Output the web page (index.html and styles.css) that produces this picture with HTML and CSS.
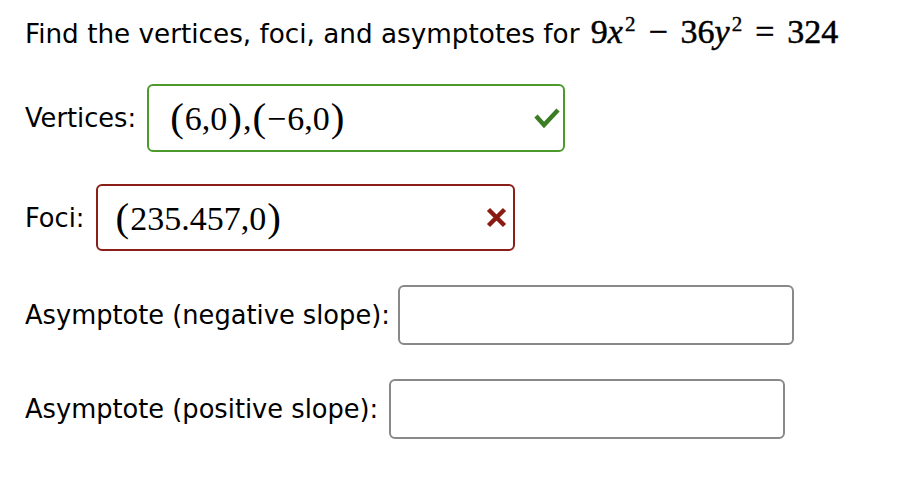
FILE: index.html
```html
<!DOCTYPE html>
<html>
<head>
<meta charset="utf-8">
<link rel="stylesheet" href="styles.css">
</head>
<body>
<div class="page">
  <p class="title">Find the vertices, foci, and asymptotes for <span class="math">9<i class="vx">x</i><sup>2</sup><span class="bin">−</span>36<i class="vy">y</i><sup>2</sup><span class="rel">=</span>324</span></p>
  <div class="rows">
    <div class="row">
      <span class="label">Vertices:</span>
      <div class="box box-correct">
        <span class="value"><span class="paren">(</span>6,0<span class="paren">)</span>,<span class="paren">(</span><span class="minus">−</span>6,0<span class="paren">)</span></span>
        <svg class="icon" width="26" height="22" viewBox="0 0 26 22"><polyline points="2,9 10,18 24,3" fill="none" stroke="#3b7d23" stroke-width="4.5"/></svg>
      </div>
    </div>
    <div class="row row-foci">
      <span class="label">Foci:</span>
      <div class="box box-wrong">
        <span class="value"><span class="paren">(</span>235.457,0<span class="paren">)</span></span>
        <svg class="icon" width="21" height="21" viewBox="0 0 21 21"><path d="M2.5 2.5 L18.5 18.5 M18.5 2.5 L2.5 18.5" stroke="#8a1b12" stroke-width="4.5"/></svg>
      </div>
    </div>
    <div class="row row-neg">
      <span class="label">Asymptote (negative slope):</span>
      <div class="box box-empty"></div>
    </div>
    <div class="row row-pos">
      <span class="label">Asymptote (positive slope):</span>
      <div class="box box-empty"></div>
    </div>
  </div>
</div>
</body>
</html>
```

FILE: styles.css
```css
html, body {
  margin: 0;
  padding: 0;
  background: #ffffff;
}
.page {
  padding: 19px 0 0 25px;
  font-family: "DejaVu Sans", sans-serif;
  font-size: 26px;
  color: #000;
}
.title {
  margin: 0;
  height: 30px;
  line-height: 30px;
  font-size: 26.25px;
  white-space: nowrap;
}
.math {
  font-family: "Liberation Serif", serif;
  font-size: 34px;
  line-height: 0;
  margin-left: 3px;
  -webkit-text-stroke: 0.5px #000;
}
.math i {
  font-style: italic;
}
.vx { margin-right: 2px; }
.vy { margin-right: 2px; }
.math sup {
  font-size: 21px;
  line-height: 0;
  vertical-align: 12px;
  -webkit-text-stroke: 0.4px #000;
}
.bin {
  margin: 0 13px;
}
.rel {
  margin: 0 13px;
}
.rows {
  display: flex;
  flex-direction: column;
  margin-top: 35px;
}
.row {
  display: flex;
  align-items: center;
}
.label {
  font-size: 25.7px;
  margin-right: 11px;
}
.row-neg .label {
  margin-right: 8px;
}
.box {
  box-sizing: border-box;
  border: 2px solid #888;
  border-radius: 6px;
  display: flex;
  align-items: center;
  justify-content: space-between;
  padding: 0 3px 0 20px;
}
.box-correct {
  width: 418px;
  height: 68px;
  border-color: #4c9a2b;
}
.box-wrong {
  width: 419px;
  height: 67px;
  border-color: #8b1e16;
  padding-left: 17px;
  padding-right: 6px;
}
.box-empty {
  width: 396px;
  height: 60px;
  border-color: #898989;
}
.row-foci { margin-top: 32px; }
.row-neg { margin-top: 34px; }
.row-pos { margin-top: 34px; }
.value {
  font-family: "Liberation Serif", serif;
  font-size: 34px;
  line-height: 40px;
}
.paren {
  font-size: 41px;
  margin: 0 1px;
  vertical-align: -1px;
}
.minus {
  margin-right: 1px;
}
.icon {
  display: block;
}
```
